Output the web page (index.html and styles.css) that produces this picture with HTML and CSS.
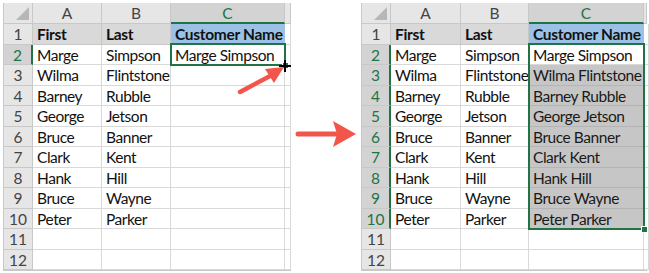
FILE: index.html
```html
<!DOCTYPE html>
<html>
<head>
<meta charset="utf-8">
<link rel="stylesheet" href="styles.css">
</head>
<body>
<div class="page">
  <div class="sheet left">
    <div class="corner"><span class="tri"></span></div>
    <div class="ch">A</div><div class="ch">B</div><div class="ch sel">C</div><div class="ch"></div>

    <div class="rh">1</div><div class="c hdr b">First</div><div class="c hdr b">Last</div><div class="c blue b">Customer Name</div><div class="c"></div>
    <div class="rh sel">2</div><div class="c">Marge</div><div class="c">Simpson</div><div class="c">Marge Simpson</div><div class="c"></div>
    <div class="rh">3</div><div class="c">Wilma</div><div class="c">Flintstone</div><div class="c"></div><div class="c"></div>
    <div class="rh">4</div><div class="c">Barney</div><div class="c">Rubble</div><div class="c"></div><div class="c"></div>
    <div class="rh">5</div><div class="c">George</div><div class="c">Jetson</div><div class="c"></div><div class="c"></div>
    <div class="rh">6</div><div class="c">Bruce</div><div class="c">Banner</div><div class="c"></div><div class="c"></div>
    <div class="rh">7</div><div class="c">Clark</div><div class="c">Kent</div><div class="c"></div><div class="c"></div>
    <div class="rh">8</div><div class="c">Hank</div><div class="c">Hill</div><div class="c"></div><div class="c"></div>
    <div class="rh">9</div><div class="c">Bruce</div><div class="c">Wayne</div><div class="c"></div><div class="c"></div>
    <div class="rh">10</div><div class="c">Peter</div><div class="c">Parker</div><div class="c"></div><div class="c"></div>
    <div class="rh">11</div><div class="c"></div><div class="c"></div><div class="c"></div><div class="c"></div>
    <div class="rh">12</div><div class="c"></div><div class="c"></div><div class="c"></div><div class="c"></div>

    <div class="selbox selbox-left"><span class="handle"></span></div>
    <svg class="drag" width="70" height="45" viewBox="0 0 70 45">
      <line x1="8" y1="36" x2="40" y2="19" stroke="#f2564b" stroke-width="4.5" stroke-linecap="round"/>
      <polygon points="52,11 33,13 42,27" fill="#f2564b"/>
      <path d="M53 4 V16 M47 10 H59" stroke="#000" stroke-width="2"/>
    </svg>
  </div>

  <div class="gap">
    <svg width="64" height="30" viewBox="0 0 64 30">
      <line x1="4" y1="15" x2="42" y2="15" stroke="#f2564b" stroke-width="5" stroke-linecap="round"/>
      <polygon points="39,2 62,15 39,28 43,15" fill="#f2564b"/>
    </svg>
  </div>

  <div class="sheet right">
    <div class="corner"><span class="tri"></span></div>
    <div class="ch">A</div><div class="ch">B</div><div class="ch sel">C</div><div class="ch"></div>

    <div class="rh">1</div><div class="c hdr b">First</div><div class="c hdr b">Last</div><div class="c blue b">Customer Name</div><div class="c"></div>
    <div class="rh sel">2</div><div class="c">Marge</div><div class="c">Simpson</div><div class="c">Marge Simpson</div><div class="c"></div>
    <div class="rh sel">3</div><div class="c">Wilma</div><div class="c">Flintstone</div><div class="c fill">Wilma Flintstone</div><div class="c"></div>
    <div class="rh sel">4</div><div class="c">Barney</div><div class="c">Rubble</div><div class="c fill">Barney Rubble</div><div class="c"></div>
    <div class="rh sel">5</div><div class="c">George</div><div class="c">Jetson</div><div class="c fill">George Jetson</div><div class="c"></div>
    <div class="rh sel">6</div><div class="c">Bruce</div><div class="c">Banner</div><div class="c fill">Bruce Banner</div><div class="c"></div>
    <div class="rh sel">7</div><div class="c">Clark</div><div class="c">Kent</div><div class="c fill">Clark Kent</div><div class="c"></div>
    <div class="rh sel">8</div><div class="c">Hank</div><div class="c">Hill</div><div class="c fill">Hank Hill</div><div class="c"></div>
    <div class="rh sel">9</div><div class="c">Bruce</div><div class="c">Wayne</div><div class="c fill">Bruce Wayne</div><div class="c"></div>
    <div class="rh sel">10</div><div class="c">Peter</div><div class="c">Parker</div><div class="c fill">Peter Parker</div><div class="c"></div>
    <div class="rh">11</div><div class="c"></div><div class="c"></div><div class="c"></div><div class="c"></div>
    <div class="rh">12</div><div class="c"></div><div class="c"></div><div class="c"></div><div class="c"></div>

    <div class="selbox selbox-right"><span class="handle"></span></div>
  </div>
</div>
</body>
</html>
```
FILE: styles.css
```css
* { box-sizing: border-box; }
html, body { margin: 0; padding: 0; background: #fff; }
body { width: 649px; height: 273px; overflow: hidden; font-family: Lato, "Liberation Sans", sans-serif; }

.page { display: flex; padding: 3px 0 0 3px; }

.sheet {
  position: relative;
  display: grid;
  grid-template-rows: 21px repeat(12, 20.5px);
  border-left: 1px solid #c8c8c8;
  border-bottom: 1px solid #c8c8c8;
}
.left { grid-template-columns: 29px 69px 69px 114px 6px; }
.right { grid-template-columns: 29px 70px 68px 115px 3px; }

.gap { width: 70px; display: flex; align-items: flex-start; padding-top: 116px; padding-left: 3px; }

.corner { background: #e6e6e6; border-right: 1px solid #c8c8c8; border-bottom: 1px solid #c8c8c8; position: relative; }
.tri {
  position: absolute; right: 3px; bottom: 3px; width: 0; height: 0;
  border-left: 13px solid transparent; border-bottom: 13px solid #b7b7b7;
}

.ch {
  background: #e6e6e6; color: #444; font-size: 15.5px; text-align: center; line-height: 20px;
  border-right: 1px solid #c8c8c8; border-bottom: 1px solid #c8c8c8;
}
.ch.sel { background: #d3d3d3; color: #217346; border-bottom: 2px solid #217346; }

.rh {
  background: #e6e6e6; color: #444; font-size: 15.5px; text-align: center; line-height: 20px;
  border-right: 1px solid #c8c8c8; border-bottom: 1px solid #c8c8c8;
}
.rh.sel { background: #d3d3d3; color: #217346; border-right: 2px solid #217346; }

.c {
  font-size: 15.5px; letter-spacing: -0.45px; color: #111; line-height: 20px; padding-left: 4px;
  white-space: nowrap; overflow: hidden;
  border-right: 1px solid #d9d9d9; border-bottom: 1px solid #d9d9d9;
}
.b { font-weight: 700; letter-spacing: -0.3px; }
.hdr { background: #d9d9d9; border-color: #c8c8c8; }
.blue { background: #9bc2e6; border-color: #9bc2e6; }
.fill { background: #c6c6c6; border-color: #b4b4b4; color: #1a1a1a; }

.selbox { position: absolute; border: 2px solid #217346; pointer-events: none; }
.selbox-left { left: 166px; top: 40px; width: 116px; height: 23px; }
.selbox-right { left: 166px; top: 40px; width: 117px; height: 187px; }
.handle {
  position: absolute; right: -5px; bottom: -5px; width: 7px; height: 7px;
  background: #217346; border: 1px solid #fff;
}

.drag { position: absolute; left: 228px; top: 53px; }
```
